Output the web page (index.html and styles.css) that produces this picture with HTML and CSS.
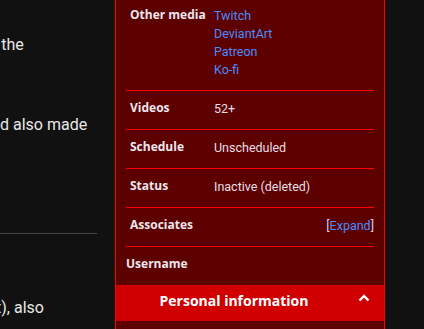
FILE: index.html
```html
<!DOCTYPE html>
<html lang="en">
<head>
    <meta charset="UTF-8">
    <meta name="viewport" content="width=device-width, initial-scale=1.0">
    <title>Infobox</title>
    <link rel="stylesheet" href="styles.css">
</head>
<body>
    <div class="page">
        <div class="article">
            <p class="line line-first">t the</p>
            <p class="line line-second">d also made</p>
            <hr class="divider">
            <p class="line line-third">t), also</p>
            <p class="line line-fourth">n to the first</p>
        </div>

        <aside class="infobox">
            <div class="row">
                <div class="label">Other media</div>
                <div class="value">
                    <a href="#">Twitch</a><br>
                    <a href="#">DeviantArt</a><br>
                    <a href="#">Patreon</a><br>
                    <a href="#">Ko-fi</a>
                </div>
            </div>
            <div class="row">
                <div class="label">Videos</div>
                <div class="value">52+</div>
            </div>
            <div class="row">
                <div class="label">Schedule</div>
                <div class="value">Unscheduled</div>
            </div>
            <div class="row">
                <div class="label">Status</div>
                <div class="value">Inactive (deleted)</div>
            </div>
            <div class="row">
                <div class="label">Associates</div>
                <div class="value value-right">[<a href="#">Expand</a>]</div>
            </div>
            <div class="row row-plain">
                <div class="label">Username</div>
            </div>
            <div class="section-header">
                <div class="section-title">Personal information</div>
                <svg class="chevron" width="12" height="8" viewBox="0 0 12 8">
                    <path d="M1.5 6.5 L6 2 L10.5 6.5" fill="none" stroke="#fff" stroke-width="2.4"/>
                </svg>
            </div>
            <div class="section-body"></div>
        </aside>
    </div>
</body>
</html>
```

FILE: styles.css
```css
* {
    margin: 0;
    padding: 0;
    box-sizing: border-box;
}

body {
    background-color: #111111;
    overflow: hidden;
    height: 329px;
}

.page {
    display: flex;
    align-items: flex-start;
    height: 329px;
    overflow: hidden;
}

/* article column, cut off by the left edge of the window */
.article {
    width: 97px;
    flex-shrink: 0;
    overflow: hidden;
    padding-top: 33px;
    font-family: Roboto, "Liberation Sans", sans-serif;
    font-size: 16px;
    line-height: 24px;
    color: #e8e8e8;
}

.line {
    white-space: nowrap;
}

.line-first {
    margin-left: -8px;
}

.line-second {
    margin-top: 56px;
}

.divider {
    border: none;
    border-top: 1px solid #454545;
    margin-top: 96px;
}

.line-third {
    margin-top: 62px;
    margin-left: -4px;
}

.line-fourth {
    margin-top: 7px;
    margin-left: -6px;
}

/* infobox */
.infobox {
    width: 270px;
    margin-left: 18px;
    margin-top: -3px;
    background-color: #5c0000;
    border: 1px solid #ff0000;
    min-height: 340px;
}

.row {
    display: flex;
    min-height: 39px;
    margin: 0 10px;
    padding: 9px 0 11px 4px;
    border-bottom: 1px solid #ff0000;
}

.row-plain {
    padding-left: 0;
    border-bottom: none;
    min-height: 38px;
}

.label {
    width: 84px;
    flex-shrink: 0;
    font-family: "Open Sans", "Liberation Sans", sans-serif;
    font-weight: 700;
    font-size: 12px;
    line-height: 15px;
    color: #eee6ee;
}

.value {
    flex: 1;
    font-family: Roboto, "Liberation Sans", sans-serif;
    font-size: 12.5px;
    line-height: 18px;
    color: #e6dee6;
}

.value-right {
    text-align: right;
    color: #d8d0e0;
}

.value a {
    color: #4b8bff;
    text-decoration: none;
}

.section-header {
    display: flex;
    align-items: flex-start;
    height: 36px;
    padding: 5px 14px 9px 0;
    background-color: #d10000;
}

.section-title {
    flex: 1;
    text-align: center;
    font-family: "Open Sans", "Liberation Sans", sans-serif;
    font-weight: 700;
    font-size: 14px;
    line-height: 22px;
    color: #ffffff;
}

.chevron {
    margin-left: 6px;
    margin-top: 4px;
}

.section-body {
    height: 20px;
}
```
